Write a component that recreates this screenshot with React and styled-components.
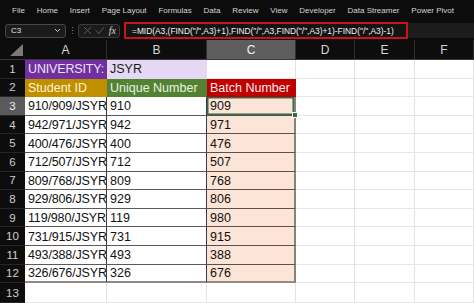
import React from "react";
import styled, { createGlobalStyle, css } from "styled-components";

const Global = createGlobalStyle`
  html, body { margin: 0; padding: 0; background: #0c0c0c; overflow: hidden; }
  body { width: 474px; height: 303px; font-family: "Liberation Sans", Arial, sans-serif; }
`;

const Page = styled.div`
  width: 474px;
  height: 303px;
  display: flex;
  flex-direction: column;
  background: #0c0c0c;
  overflow: hidden;
`;

const MenuBar = styled.nav`
  height: 21px;
  display: flex;
  align-items: center;
  gap: 11.8px;
  padding-left: 12px;
  font-size: 8px;
  color: #d4d4d4;
  white-space: nowrap;
`;

const MenuItem = styled.span``;

const FormulaRow = styled.div`
  height: 19px;
  display: flex;
  align-items: center;
  padding-left: 5px;
`;

const NameBox = styled.div`
  width: 61px;
  height: 14px;
  box-sizing: border-box;
  border: 1px solid #474747;
  border-radius: 3px;
  background: #1b1b1b;
  display: flex;
  align-items: center;
  justify-content: space-between;
  padding: 0 4px 0 5px;
  font-size: 8px;
  color: #e6e6e6;
`;

const Dots = styled.span`
  width: 12px;
  text-align: center;
  color: #8a8a8a;
  font-size: 9px;
`;

const ActionBox = styled.div`
  width: 42px;
  height: 14px;
  box-sizing: border-box;
  border: 1px solid #3a3a3a;
  border-radius: 3px;
  background: #1b1b1b;
  display: flex;
  align-items: center;
  justify-content: space-between;
  padding: 0 3px 0 4px;
`;

const Fx = styled.span`
  font-family: "Liberation Serif", serif;
  font-style: italic;
  font-size: 10px;
  color: #d8d8d8;
`;

const FormulaField = styled.div`
  flex: 1;
  height: 15px;
  margin-left: 4px;
  background: #1c1c1c;
  display: flex;
  align-items: center;
`;

const Highlight = styled.div`
  width: 284px;
  height: 17px;
  box-sizing: border-box;
  border: 2px solid #c8141c;
  border-radius: 1px;
  display: flex;
  align-items: center;
  padding-left: 6px;
  font-size: 8.4px;
  color: #f2f2f2;
  white-space: nowrap;
  background: #141414;
`;

const Sheet = styled.div`
  flex: 1;
  display: grid;
  grid-template-columns: 25px 82px 100px 89px 59px 60px 1fr;
  grid-template-rows: 20px repeat(12, 18.6px) 1fr;
  background: #ffffff;
`;

const Corner = styled.div`
  background: #0d0d0d;
  border-bottom: 1px solid #3a3a3a;
  box-sizing: border-box;
  display: flex;
  align-items: flex-end;
  justify-content: flex-end;
  padding: 0 2px 3px 0;
`;

const ColHead = styled.div`
  box-sizing: border-box;
  background: ${(p) => (p.$active ? "#5d5d5d" : "#0d0d0d")};
  color: ${(p) => (p.$active ? "#f2f2f2" : "#d8d8d8")};
  border-right: 1px solid #303030;
  border-bottom: 1px solid #3a3a3a;
  display: flex;
  align-items: center;
  justify-content: center;
  font-size: 12px;
  padding-top: 1px;
`;

const RowHead = styled.div`
  box-sizing: border-box;
  background: ${(p) => (p.$active ? "#5a5a5a" : "#0d0d0d")};
  color: ${(p) => (p.$active ? "#f0f0f0" : "#cfcfcf")};
  border-bottom: 1px solid #262626;
  display: flex;
  align-items: center;
  justify-content: center;
  font-size: 11.5px;
`;

const tones = {
  plain: css`background: #ffffff; color: #111; border-right-color: #e2e2e2; border-bottom-color: #e6e6e6;`,
  purple: css`background: #7030a0; color: #eee2f8; border-right-color: #7030a0; border-bottom-color: #7030a0;`,
  lavender: css`background: #e4d8f4; color: #1a1a1a; border-right-color: #e4d8f4; border-bottom-color: #e4d8f4;`,
  gold: css`background: #bf8f00; color: #fff3d0; border-right-color: #bf8f00; border-bottom-color: #bf8f00;`,
  green: css`background: #548235; color: #e8f2e0; border-right-color: #548235; border-bottom-color: #548235;`,
  red: css`background: #c00000; color: #fdeceb; border-right-color: #c00000; border-bottom-color: #c00000;`,
  data: css`background: #ffffff; color: #111; border-right-color: #3c3c3c; border-bottom-color: #5a5a5a;`,
  peach: css`background: #fce4d6; color: #111; border-right: 2px solid #8a817a; border-bottom-color: #5a5050;`,
};

const Cell = styled.div`
  box-sizing: border-box;
  position: relative;
  border-right: 1px solid #e2e2e2;
  border-bottom: 1px solid #e6e6e6;
  display: flex;
  align-items: center;
  padding: 1px 0 0 3px;
  font-size: 12.5px;
  letter-spacing: ${(p) => (p.$tight ? "-0.15px" : "0")};
  white-space: nowrap;
  ${(p) => tones[p.$tone || "plain"]}
  ${(p) =>
    p.$last &&
    css`
      border-bottom: 2px solid #8f8a86;
    `}
  ${(p) =>
    p.$selected &&
    css`
      box-shadow: inset 0 0 0 1.5px #2f6b44;
      &::after {
        content: "";
        position: absolute;
        right: -4px;
        bottom: -3px;
        width: 4px;
        height: 4px;
        background: #2f6b44;
        border: 1px solid #fff;
        z-index: 2;
      }
    `}
`;

const menu = [
  "File", "Home", "Insert", "Page Layout", "Formulas", "Data",
  "Review", "View", "Developer", "Data Streamer", "Power Pivot",
];

const data = [
  ["910/909/JSYR", "910", "909"],
  ["942/971/JSYR", "942", "971"],
  ["400/476/JSYR", "400", "476"],
  ["712/507/JSYR", "712", "507"],
  ["809/768/JSYR", "809", "768"],
  ["929/806/JSYR", "929", "806"],
  ["119/980/JSYR", "119", "980"],
  ["731/915/JSYR", "731", "915"],
  ["493/388/JSYR", "493", "388"],
  ["326/676/JSYR", "326", "676"],
];

const cols = ["A", "B", "C", "D", "E", "F"];

const Empties = ({ n }) =>
  Array.from({ length: n }, (_, i) => <Cell key={`e${i}`} $tone="plain" />);

export default function App() {
  return (
    <>
      <Global />
      <Page>
        <MenuBar>
          {menu.map((m) => (
            <MenuItem key={m}>{m}</MenuItem>
          ))}
        </MenuBar>
        <FormulaRow>
          <NameBox>
            <span>C3</span>
            <svg width="7" height="5" viewBox="0 0 7 5">
              <path d="M1 1 L3.5 3.5 L6 1" stroke="#cfcfcf" strokeWidth="1" fill="none" />
            </svg>
          </NameBox>
          <Dots>⋮</Dots>
          <ActionBox>
            <svg width="9" height="9" viewBox="0 0 9 9">
              <path d="M1 1 L8 8 M8 1 L1 8" stroke="#5c5c5c" strokeWidth="1" />
            </svg>
            <svg width="10" height="9" viewBox="0 0 10 9">
              <path d="M1 4.5 L3.8 7.5 L9 1.2" stroke="#5c5c5c" strokeWidth="1" fill="none" />
            </svg>
            <Fx>fx</Fx>
          </ActionBox>
          <FormulaField>
            <Highlight>=MID(A3,(FIND("/",A3)+1),FIND("/",A3,FIND("/",A3)+1)-FIND("/",A3)-1)</Highlight>
          </FormulaField>
        </FormulaRow>
        <Sheet>
          <Corner>
            <svg width="13" height="12" viewBox="0 0 13 12">
              <path d="M13 0 L13 12 L0 12 Z" fill="#7a7a7a" />
            </svg>
          </Corner>
          {cols.map((c) => (
            <ColHead key={c} $active={c === "C"}>
              {c}
            </ColHead>
          ))}

          <RowHead>1</RowHead>
          <Cell $tone="purple" $tight>UNIVERSITY:</Cell>
          <Cell $tone="lavender">JSYR</Cell>
          <Empties n={4} />

          <RowHead>2</RowHead>
          <Cell $tone="gold">Student ID</Cell>
          <Cell $tone="green">Unique Number</Cell>
          <Cell $tone="red">Batch Number</Cell>
          <Empties n={3} />

          {data.map((r, i) => (
            <React.Fragment key={r[0]}>
              <RowHead $active={i === 0}>{i + 3}</RowHead>
              <Cell $tone="data" $tight $last={i === data.length - 1}>{r[0]}</Cell>
              <Cell $tone="data" $last={i === data.length - 1}>{r[1]}</Cell>
              <Cell $tone="peach" $last={i === data.length - 1} $selected={i === 0}>
                {r[2]}
              </Cell>
              <Empties n={3} />
            </React.Fragment>
          ))}

          <RowHead>13</RowHead>
          <Empties n={6} />
        </Sheet>
      </Page>
    </>
  );
}
